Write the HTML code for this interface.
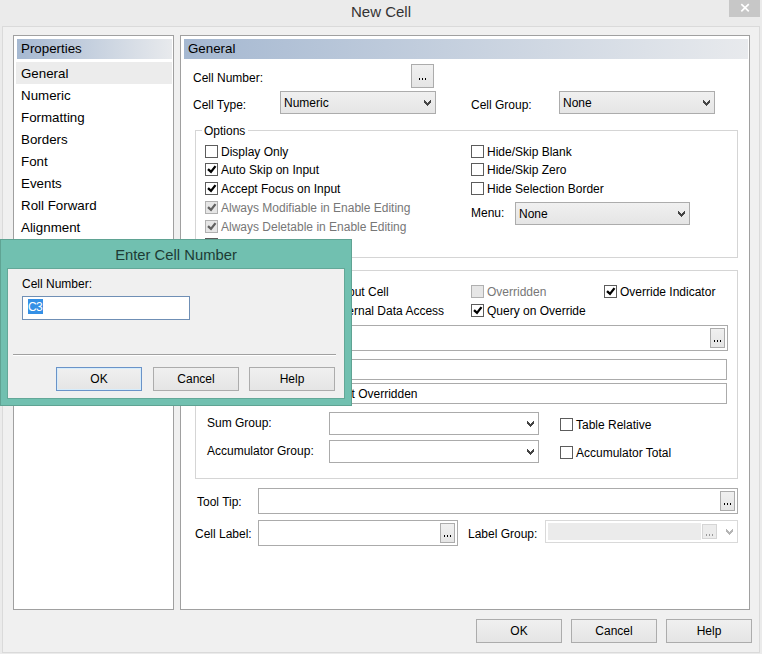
<!DOCTYPE html>
<html><head><meta charset="utf-8">
<style>
*{box-sizing:border-box;margin:0;padding:0}
html,body{width:762px;height:654px;overflow:hidden;background:#ebebeb;font-family:"Liberation Sans",sans-serif;color:#000}
.a{position:absolute}
.t{position:absolute;font-size:12px;line-height:14px;white-space:nowrap;color:#000}
.L{position:absolute;font-size:13.33px;line-height:16px;white-space:nowrap;color:#000}
.btn{position:absolute;border:1px solid #acacac;background:linear-gradient(#f0f0f0,#e5e5e5);font-size:12px;text-align:center;color:#000}
.cb{position:absolute;width:13px;height:13px;border:1px solid #5c5c5c;background:#fff}
.cbd{position:absolute;width:13px;height:13px;border:1px solid #b0b0b0;background:#e6e6e6}
.combo{position:absolute;border:1px solid #acacac;background:linear-gradient(#f0f0f0,#e5e5e5);}
.field{position:absolute;border:1px solid #ababab;background:#fff}
.gb{position:absolute;border:1px solid #d5d5d5}
.dots{position:absolute;border:1px solid #acacac;background:linear-gradient(#f0f0f0,#e5e5e5)}
</style></head><body>
<!-- title bar -->
<div class="a" style="left:0;top:0;width:762px;height:654px;background:#ebebeb"></div>
<div class="a" style="left:351px;top:3px;font-size:15px;line-height:18px;color:#333">New Cell</div>
<div class="a" style="left:729px;top:0;width:31px;height:17px;background:#c7c7c7"></div>
<svg class="a" style="left:729px;top:0" width="31" height="17"><path d="M12.3 4.2 L19.8 11.4 M19.8 4.2 L12.3 11.4" stroke="#fff" stroke-width="1.7"/></svg>
<!-- body -->
<div class="a" style="left:2px;top:26px;width:758px;height:627px;background:#f0f0f0;border:1px solid #dadada"></div>

<!-- list box -->
<div class="a" style="left:13px;top:35px;width:161px;height:575px;background:#fff;border:1px solid #a0a0a0"></div>
<div class="a" style="left:17px;top:39px;width:155px;height:20px;background:linear-gradient(90deg,#a5b8d1,#e8eaed)"></div>
<div class="L" style="left:21px;top:41px">Properties</div>
<div class="a" style="left:16px;top:62px;width:156px;height:22px;background:#ececec"></div>
<div class="L" style="left:21px;top:66px">General</div>
<div class="L" style="left:21px;top:88px">Numeric</div>
<div class="L" style="left:21px;top:110px">Formatting</div>
<div class="L" style="left:21px;top:132px">Borders</div>
<div class="L" style="left:21px;top:154px">Font</div>
<div class="L" style="left:21px;top:176px">Events</div>
<div class="L" style="left:21px;top:198px">Roll Forward</div>
<div class="L" style="left:21px;top:220px">Alignment</div>

<!-- right panel -->
<div class="a" style="left:180px;top:35px;width:570px;height:575px;background:#fff;border:1px solid #a0a0a0"></div>
<div class="a" style="left:184px;top:39px;width:564px;height:20px;background:linear-gradient(90deg,#a5b8d1,#e8eaed)"></div>
<div class="L" style="left:188px;top:41px">General</div>


<!-- general content -->
<div class="t" style="left:193px;top:71px">Cell Number:</div>
<div class="dots" style="left:411px;top:64px;width:23px;height:24px"></div>
<div class="t" style="left:193px;top:98px">Cell Type:</div>
<div class="combo" style="left:280px;top:91px;width:156px;height:23px"></div>
<div class="t" style="left:284px;top:96px">Numeric</div>
<div class="t" style="left:471px;top:98px">Cell Group:</div>
<div class="combo" style="left:559px;top:91px;width:156px;height:23px"></div>
<div class="t" style="left:563px;top:96px">None</div>

<!-- options group -->
<div class="gb" style="left:195px;top:130px;width:543px;height:128px"></div>
<div class="a" style="left:202px;top:125px;width:46px;height:10px;background:#fff"></div>
<div class="t" style="left:204px;top:124px">Options</div>
<div class="cb" style="left:205px;top:145px"></div>
<div class="t" style="left:221px;top:145px">Display Only</div>
<div class="cb" style="left:205px;top:163px"></div>
<div class="t" style="left:221px;top:163px">Auto Skip on Input</div>
<div class="cb" style="left:205px;top:182px"></div>
<div class="t" style="left:221px;top:182px">Accept Focus on Input</div>
<div class="cbd" style="left:205px;top:201px"></div>
<div class="t" style="left:221px;top:201px;color:#777">Always Modifiable in Enable Editing</div>
<div class="cbd" style="left:205px;top:220px"></div>
<div class="t" style="left:221px;top:220px;color:#777">Always Deletable in Enable Editing</div>
<div class="cb" style="left:205px;top:238px"></div>

<div class="cb" style="left:471px;top:145px"></div>
<div class="t" style="left:487px;top:145px">Hide/Skip Blank</div>
<div class="cb" style="left:471px;top:163px"></div>
<div class="t" style="left:487px;top:163px">Hide/Skip Zero</div>
<div class="cb" style="left:471px;top:182px"></div>
<div class="t" style="left:487px;top:182px">Hide Selection Border</div>
<div class="t" style="left:471px;top:206px">Menu:</div>
<div class="combo" style="left:515px;top:202px;width:175px;height:23px"></div>
<div class="t" style="left:519px;top:207px">None</div>

<!-- group 2 -->
<div class="gb" style="left:195px;top:270px;width:543px;height:209px"></div>
<div class="t" style="left:338px;top:285px">Input Cell</div>
<div class="t" style="left:330px;top:304px">External Data Access</div>
<div class="cbd" style="left:471px;top:285px"></div>
<div class="t" style="left:487px;top:285px;color:#777">Overridden</div>
<div class="cb" style="left:604px;top:285px"></div>
<div class="t" style="left:620px;top:285px">Override Indicator</div>
<div class="cb" style="left:471px;top:304px"></div>
<div class="t" style="left:487px;top:304px">Query on Override</div>
<div class="field" style="left:329px;top:325px;width:399px;height:26px"></div>
<div class="dots" style="left:710px;top:328px;width:15px;height:20px"></div>
<div class="field" style="left:329px;top:359px;width:398px;height:21px"></div>
<div class="field" style="left:329px;top:383px;width:398px;height:21px"></div>
<div class="t" style="left:293px;top:387px">Value If Not Overridden</div>
<div class="t" style="left:207px;top:416px">Sum Group:</div>
<div class="field" style="left:329px;top:412px;width:210px;height:23px"></div>
<div class="t" style="left:207px;top:444px">Accumulator Group:</div>
<div class="field" style="left:329px;top:440px;width:210px;height:23px"></div>
<div class="cb" style="left:560px;top:418px"></div>
<div class="t" style="left:576px;top:418px">Table Relative</div>
<div class="cb" style="left:560px;top:446px"></div>
<div class="t" style="left:576px;top:446px">Accumulator Total</div>

<!-- bottom fields -->
<div class="t" style="left:197px;top:495px">Tool Tip:</div>
<div class="field" style="left:258px;top:488px;width:480px;height:26px"></div>
<div class="dots" style="left:720px;top:491px;width:15px;height:20px"></div>
<div class="t" style="left:195px;top:527px">Cell Label:</div>
<div class="field" style="left:258px;top:520px;width:200px;height:26px"></div>
<div class="dots" style="left:440px;top:523px;width:15px;height:20px"></div>
<div class="t" style="left:468px;top:527px">Label Group:</div>
<div class="a" style="left:545px;top:520px;width:193px;height:23px;border:1px solid #d9d9d9;background:#fff"></div>
<div class="a" style="left:548px;top:523px;width:153px;height:17px;background:#ebebeb"></div>
<div class="a" style="left:702px;top:524px;width:15px;height:15px;border:1px solid #d5d5d5;background:#ececec"></div>
<div class="a" style="left:706px;top:534px;width:1px;height:2px;background:#9a9a9a;box-shadow:3px 0 0 #9a9a9a,6px 0 0 #9a9a9a"></div>

<svg class="a" style="left:205px;top:163px" width="13" height="13"><path d="M3 6.1 L6 8.9 L10.5 3.1" fill="none" stroke="#000" stroke-width="2.3"/></svg>
<svg class="a" style="left:205px;top:182px" width="13" height="13"><path d="M3 6.1 L6 8.9 L10.5 3.1" fill="none" stroke="#000" stroke-width="2.3"/></svg>
<svg class="a" style="left:205px;top:201px" width="13" height="13"><path d="M3 6.1 L6 8.9 L10.5 3.1" fill="none" stroke="#606060" stroke-width="2.3"/></svg>
<svg class="a" style="left:205px;top:220px" width="13" height="13"><path d="M3 6.1 L6 8.9 L10.5 3.1" fill="none" stroke="#606060" stroke-width="2.3"/></svg>
<svg class="a" style="left:604px;top:285px" width="13" height="13"><path d="M3 6.1 L6 8.9 L10.5 3.1" fill="none" stroke="#000" stroke-width="2.3"/></svg>
<svg class="a" style="left:471px;top:304px" width="13" height="13"><path d="M3 6.1 L6 8.9 L10.5 3.1" fill="none" stroke="#000" stroke-width="2.3"/></svg>
<svg class="a" style="left:424px;top:100px" width="7" height="6" fill="#444" shape-rendering="crispEdges"><rect x="0" y="0" width="1" height="1"/><rect x="6" y="0" width="1" height="1"/><rect x="0" y="1" width="2" height="1"/><rect x="5" y="1" width="2" height="1"/><rect x="0" y="2" width="3" height="1"/><rect x="4" y="2" width="3" height="1"/><rect x="1" y="3" width="5" height="1"/><rect x="2" y="4" width="3" height="1"/><rect x="3" y="5" width="1" height="1"/></svg>
<svg class="a" style="left:703px;top:100px" width="7" height="6" fill="#444" shape-rendering="crispEdges"><rect x="0" y="0" width="1" height="1"/><rect x="6" y="0" width="1" height="1"/><rect x="0" y="1" width="2" height="1"/><rect x="5" y="1" width="2" height="1"/><rect x="0" y="2" width="3" height="1"/><rect x="4" y="2" width="3" height="1"/><rect x="1" y="3" width="5" height="1"/><rect x="2" y="4" width="3" height="1"/><rect x="3" y="5" width="1" height="1"/></svg>
<svg class="a" style="left:678px;top:211px" width="7" height="6" fill="#444" shape-rendering="crispEdges"><rect x="0" y="0" width="1" height="1"/><rect x="6" y="0" width="1" height="1"/><rect x="0" y="1" width="2" height="1"/><rect x="5" y="1" width="2" height="1"/><rect x="0" y="2" width="3" height="1"/><rect x="4" y="2" width="3" height="1"/><rect x="1" y="3" width="5" height="1"/><rect x="2" y="4" width="3" height="1"/><rect x="3" y="5" width="1" height="1"/></svg>
<svg class="a" style="left:527px;top:421px" width="7" height="6" fill="#444" shape-rendering="crispEdges"><rect x="0" y="0" width="1" height="1"/><rect x="6" y="0" width="1" height="1"/><rect x="0" y="1" width="2" height="1"/><rect x="5" y="1" width="2" height="1"/><rect x="0" y="2" width="3" height="1"/><rect x="4" y="2" width="3" height="1"/><rect x="1" y="3" width="5" height="1"/><rect x="2" y="4" width="3" height="1"/><rect x="3" y="5" width="1" height="1"/></svg>
<svg class="a" style="left:527px;top:449px" width="7" height="6" fill="#444" shape-rendering="crispEdges"><rect x="0" y="0" width="1" height="1"/><rect x="6" y="0" width="1" height="1"/><rect x="0" y="1" width="2" height="1"/><rect x="5" y="1" width="2" height="1"/><rect x="0" y="2" width="3" height="1"/><rect x="4" y="2" width="3" height="1"/><rect x="1" y="3" width="5" height="1"/><rect x="2" y="4" width="3" height="1"/><rect x="3" y="5" width="1" height="1"/></svg>
<svg class="a" style="left:726px;top:529px" width="7" height="6" fill="#b5b5b5" shape-rendering="crispEdges"><rect x="0" y="0" width="1" height="1"/><rect x="6" y="0" width="1" height="1"/><rect x="0" y="1" width="2" height="1"/><rect x="5" y="1" width="2" height="1"/><rect x="0" y="2" width="3" height="1"/><rect x="4" y="2" width="3" height="1"/><rect x="1" y="3" width="5" height="1"/><rect x="2" y="4" width="3" height="1"/><rect x="3" y="5" width="1" height="1"/></svg>
<div class="a" style="left:419px;top:78px;width:1px;height:2px;background:#000;box-shadow:3px 0 0 #000,6px 0 0 #000"></div>
<div class="a" style="left:714px;top:340px;width:1px;height:2px;background:#000;box-shadow:3px 0 0 #000,6px 0 0 #000"></div>
<div class="a" style="left:724px;top:503px;width:1px;height:2px;background:#000;box-shadow:3px 0 0 #000,6px 0 0 #000"></div>
<div class="a" style="left:444px;top:535px;width:1px;height:2px;background:#000;box-shadow:3px 0 0 #000,6px 0 0 #000"></div>
<!-- bottom buttons -->
<div class="btn" style="left:476px;top:619px;width:86px;height:24px;line-height:23px">OK</div>
<div class="btn" style="left:571px;top:619px;width:86px;height:24px;line-height:23px">Cancel</div>
<div class="btn" style="left:666px;top:619px;width:86px;height:24px;line-height:23px">Help</div>

<!-- modal dialog -->
<div class="a" style="left:0;top:239px;width:352px;height:167px;background:#71c0b0;border:1px solid #5fa393"></div>
<div class="a" style="left:0;top:246px;width:352px;text-align:center;font-size:14.8px;line-height:18px;color:#1d3b34">Enter Cell Number</div>
<div class="a" style="left:8px;top:269px;width:336px;height:129px;background:#f0f0f0;box-shadow:0 0 0 1px #63a898"></div>
<div class="t" style="left:22px;top:277px">Cell Number:</div>
<div class="a" style="left:22px;top:296px;width:168px;height:24px;border:1px solid #6f8fb5;background:#fff"></div>
<div class="a" style="left:28px;top:299px;width:15px;height:15px;background:#3490e6"></div>
<div class="t" style="left:28px;top:300px;color:#fff;letter-spacing:-0.6px">C3</div>
<div class="a" style="left:13px;top:354px;width:323px;height:1px;background:#a0a0a0;box-shadow:0 1px 0 #fff"></div>
<div class="btn" style="left:56px;top:367px;width:86px;height:24px;line-height:23px;border-color:#6a93c8;box-shadow:inset 0 0 0 1px #d6ecfb">OK</div>
<div class="btn" style="left:153px;top:367px;width:86px;height:24px;line-height:23px">Cancel</div>
<div class="btn" style="left:249px;top:367px;width:86px;height:24px;line-height:23px">Help</div>
</body></html>
